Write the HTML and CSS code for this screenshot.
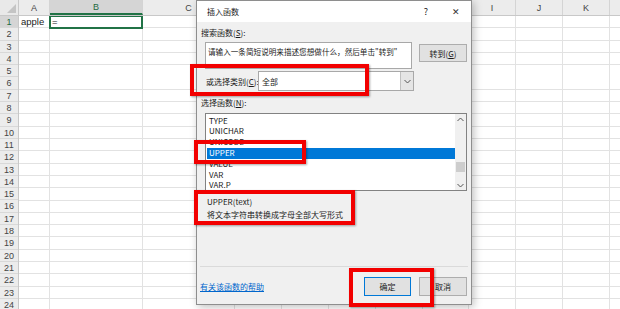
FILE: index.html
```html
<!DOCTYPE html>
<html lang="zh-CN">
<head>
<meta charset="utf-8">
<title>插入函数</title>
<link rel="stylesheet" href="styles.css">
</head>
<body>
<div class="screen">
  <div class="sheet">
    <div class="corner"><span class="tri"></span></div>
    <div class="colhdr">
      <div class="ch w-a">A</div>
      <div class="ch w-b selhdr">B</div>
      <div class="ch w-c">C</div>
      <div class="ch w47">D</div>
      <div class="ch w47">E</div>
      <div class="ch w47">F</div>
      <div class="ch w47">G</div>
      <div class="ch w46">H</div>
      <div class="ch w47">I</div>
      <div class="ch w47">J</div>
      <div class="ch w47">K</div>
      <div class="ch w47"></div>
    </div>
    <div class="rowhdr">
      <div class="rh selrow">1</div><div class="rh">2</div><div class="rh">3</div><div class="rh">4</div>
      <div class="rh">5</div><div class="rh">6</div><div class="rh">7</div><div class="rh">8</div>
      <div class="rh">9</div><div class="rh">10</div><div class="rh">11</div><div class="rh">12</div>
      <div class="rh">13</div><div class="rh">14</div><div class="rh">15</div><div class="rh">16</div>
      <div class="rh">17</div><div class="rh">18</div><div class="rh">19</div><div class="rh">20</div>
      <div class="rh">21</div><div class="rh">22</div><div class="rh">23</div><div class="rh">24</div>
    </div>
    <div class="cells">
      <div class="col w-a"><div class="cell">apple</div></div>
      <div class="col w-b"><div class="cell active">=</div></div>
      <div class="col w-c"></div>
      <div class="col w47"></div>
      <div class="col w47"></div>
      <div class="col w47"></div>
      <div class="col w47"></div>
      <div class="col w46"></div>
      <div class="col w47"></div>
      <div class="col w47"></div>
      <div class="col w47"></div>
      <div class="col w47"></div>
    </div>
  </div>

  <div class="dialog">
    <div class="titlebar">
      <span class="title">插入函数</span>
      <span class="help">?</span>
      <span class="close">✕</span>
    </div>
    <div class="label l-search">搜索函数(<u>S</u>):</div>
    <div class="search-row">
      <div class="search-box">请输入一条简短说明来描述您想做什么，然后单击"转到"</div>
      <div class="btn btn-go">转到(<u>G</u>)</div>
    </div>
    <div class="cat-row">
      <span class="cat-label">或选择类别(<u>C</u>):</span>
      <div class="select">
        <span class="select-val">全部</span>
        <span class="select-arrow"><svg width="7" height="5" viewBox="0 0 7 5"><path d="M0.5 1 L3.5 4 L6.5 1" fill="none" stroke="#555" stroke-width="1"/></svg></span>
      </div>
    </div>
    <div class="label l-func">选择函数(<u>N</u>):</div>
    <div class="listbox">
      <div class="items">
        <div class="item">TYPE</div>
        <div class="item">UNICHAR</div>
        <div class="item">UNICODE</div>
        <div class="item selected">UPPER</div>
        <div class="item">VALUE</div>
        <div class="item">VAR</div>
        <div class="item">VAR.P</div>
      </div>
      <div class="scrollbar">
        <span class="arrow"><svg width="7" height="5" viewBox="0 0 7 5"><path d="M0.5 4 L3.5 1 L6.5 4" fill="none" stroke="#555" stroke-width="1"/></svg></span>
        <div class="track"><div class="thumb"></div></div>
        <span class="arrow"><svg width="7" height="5" viewBox="0 0 7 5"><path d="M0.5 1 L3.5 4 L6.5 1" fill="none" stroke="#555" stroke-width="1"/></svg></span>
      </div>
    </div>
    <div class="desc">
      <div class="sig">UPPER(text)</div>
      <div class="expl">将文本字符串转换成字母全部大写形式</div>
    </div>
    <div class="sep"></div>
    <div class="footer">
      <a class="link" href="#">有关该函数的帮助</a>
      <div class="btn btn-ok">确定</div>
      <div class="btn btn-cancel">取消</div>
    </div>
  </div>

  <div class="mark m1"></div>
  <div class="mark m2"></div>
  <div class="mark m3"></div>
  <div class="mark m4"></div>
</div>
</body>
</html>
```

FILE: styles.css
```css
html, body {
  margin: 0;
  padding: 0;
  background: #ffffff;
}
.screen {
  position: relative;
  width: 620px;
  height: 309px;
  overflow: hidden;
  font-family: "Noto Sans CJK SC", "Noto Sans", sans-serif;
}

/* ---------- spreadsheet ---------- */
.sheet {
  display: grid;
  grid-template-columns: 19px 1fr;
  grid-template-rows: 16px 1fr;
  width: 620px;
  height: 309px;
  font-family: "Liberation Sans", Arial, sans-serif;
}
.corner {
  background: #e9e9e9;
  border-right: 1px solid #c8c8c8;
  border-bottom: 1px solid #c8c8c8;
  box-sizing: border-box;
  display: flex;
  align-items: flex-end;
  justify-content: flex-end;
  padding: 0 2px 2px 0;
}
.tri {
  width: 0;
  height: 0;
  border-left: 9px solid transparent;
  border-bottom: 9px solid #c4c4c4;
}
.colhdr {
  display: flex;
  background: #ececec;
  border-bottom: 1px solid #c8c8c8;
  box-sizing: border-box;
  overflow: hidden;
}
.ch {
  flex: none;
  box-sizing: border-box;
  border-right: 1px solid #d4d4d4;
  font-size: 9px;
  color: #444;
  display: flex;
  align-items: center;
  justify-content: center;
  padding-top: 1px;
}
.selhdr {
  background: #d5d5d5;
  color: #1f6b3f;
  border-bottom: 2px solid #217346;
}
.w-a { width: 31px; }
.w-b { width: 93px; }
.w-c { width: 92px; }
.w47 { width: 47px; }
.w46 { width: 46px; }

.rowhdr {
  background: #ececec;
  border-right: 1px solid #c8c8c8;
  box-sizing: border-box;
  overflow: hidden;
}
.rh {
  height: 12.3px;
  box-sizing: border-box;
  border-bottom: 1px solid #d8d8d8;
  font-size: 9px;
  line-height: 12px;
  color: #444;
  text-align: center;
}
.selrow {
  background: #d5d5d5;
  color: #1f6b3f;
}
.cells {
  display: flex;
  overflow: hidden;
  background: repeating-linear-gradient(to bottom, transparent 0, transparent 11.3px, #e2e2e2 11.3px, #e2e2e2 12.3px);
}
.col {
  flex: none;
  box-sizing: border-box;
  border-right: 1px solid #e2e2e2;
}
.cell {
  height: 12.3px;
  box-sizing: border-box;
  font-size: 9.5px;
  line-height: 12px;
  padding-left: 2px;
  color: #222;
}
.active {
  outline: 2px solid #217346;
  outline-offset: -1px;
  background: #fff;
  position: relative;
}

/* ---------- dialog ---------- */
.dialog {
  position: absolute;
  left: 196px;
  top: 0;
  width: 276px;
  height: 305px;
  box-sizing: border-box;
  border: 1px solid #8e8e8e;
  background: #f0f0f0;
  box-shadow: 2px 2px 8px rgba(0, 0, 0, 0.25);
  font-size: 8px;
  color: #1a1a1a;
  display: flex;
  flex-direction: column;
}
.titlebar {
  height: 21px;
  flex: none;
  background: #ffffff;
  display: flex;
  align-items: center;
  padding-left: 10px;
  font-size: 8px;
}
.title { flex: 1; }
.help {
  width: 30px;
  text-align: center;
  font-size: 9px;
}
.close {
  width: 30px;
  text-align: center;
  font-size: 9px;
  color: #333;
}
.label {
  height: 12px;
  line-height: 12px;
  padding-left: 4px;
}
.l-search { margin-top: 5px; }
.search-row {
  display: flex;
  align-items: flex-start;
  margin-top: 3px;
  padding-left: 8px;
}
.search-box {
  width: 207px;
  height: 27px;
  box-sizing: border-box;
  background: #fff;
  border: 1px solid #a8a8a8;
  padding: 3px 2px 0 2px;
  line-height: 12px;
  font-size: 7.6px;
  white-space: nowrap;
  overflow: hidden;
}
.btn {
  box-sizing: border-box;
  background: #e1e1e1;
  border: 1px solid #adadad;
  display: flex;
  align-items: center;
  justify-content: center;
}
.btn-go {
  width: 48px;
  height: 18px;
  margin-left: 7px;
  margin-top: 2px;
}
.cat-row {
  display: flex;
  align-items: center;
  margin-top: 2px;
  padding-left: 9px;
}
.cat-label { width: 52px; white-space: nowrap; }
.select {
  width: 156px;
  height: 20px;
  box-sizing: border-box;
  background: #fff;
  border: 1px solid #a8a8a8;
  display: flex;
  align-items: stretch;
}
.select-val {
  flex: 1;
  padding-left: 3px;
  display: flex;
  align-items: center;
}
.select-arrow {
  width: 12px;
  background: #e5e5e5;
  border-left: 1px solid #c0c0c0;
  display: flex;
  align-items: center;
  justify-content: center;
}
.l-func { margin-top: 6px; }
.listbox {
  margin-top: 4px;
  margin-left: 8px;
  width: 262px;
  height: 78px;
  box-sizing: border-box;
  border: 1px solid #828282;
  background: #fff;
  display: flex;
}
.items {
  flex: 1;
  padding: 1.6px 0 0 1px;
  overflow: hidden;
}
.item {
  height: 10.8px;
  line-height: 10.8px;
  padding-left: 2px;
  font-size: 8px;
}
.selected {
  background: #0078d7;
  color: #fff;
}
.scrollbar {
  width: 11px;
  background: #f0f0f0;
  display: flex;
  flex-direction: column;
}
.arrow {
  height: 10px;
  display: flex;
  align-items: center;
  justify-content: center;
}
.track {
  flex: 1;
  display: flex;
  flex-direction: column;
  justify-content: flex-end;
  padding-bottom: 8px;
}
.thumb {
  height: 10px;
  margin: 0 1px;
  background: #cdcdcd;
}
.desc {
  margin-top: 5px;
  padding-left: 10px;
}
.sig, .expl {
  height: 12.5px;
  line-height: 12.5px;
}
.sep {
  margin: 45px 0 0 3px;
  width: 268px;
  height: 1px;
  background: #dadada;
}
.footer {
  display: flex;
  align-items: center;
  margin-top: 10px;
  padding-left: 3px;
}
.link {
  color: #0066cc;
  text-decoration: underline;
  width: 164px;
}
.btn-ok {
  width: 47px;
  height: 19px;
  border: 1px solid #0078d7;
}
.btn-cancel {
  width: 48px;
  height: 19px;
  margin-left: 8px;
}

/* ---------- red annotation boxes ---------- */
.mark {
  position: absolute;
  box-sizing: border-box;
  border: 4px solid #f20000;
  box-shadow: 1px 1px 2px rgba(0, 0, 0, 0.35);
}
.m1 { left: 190px; top: 64px; width: 179px; height: 32px; }
.m2 { left: 194px; top: 140px; width: 112px; height: 24px; }
.m3 { left: 194px; top: 190px; width: 161px; height: 35px; }
.m4 { left: 349px; top: 268px; width: 85px; height: 39px; }
```
